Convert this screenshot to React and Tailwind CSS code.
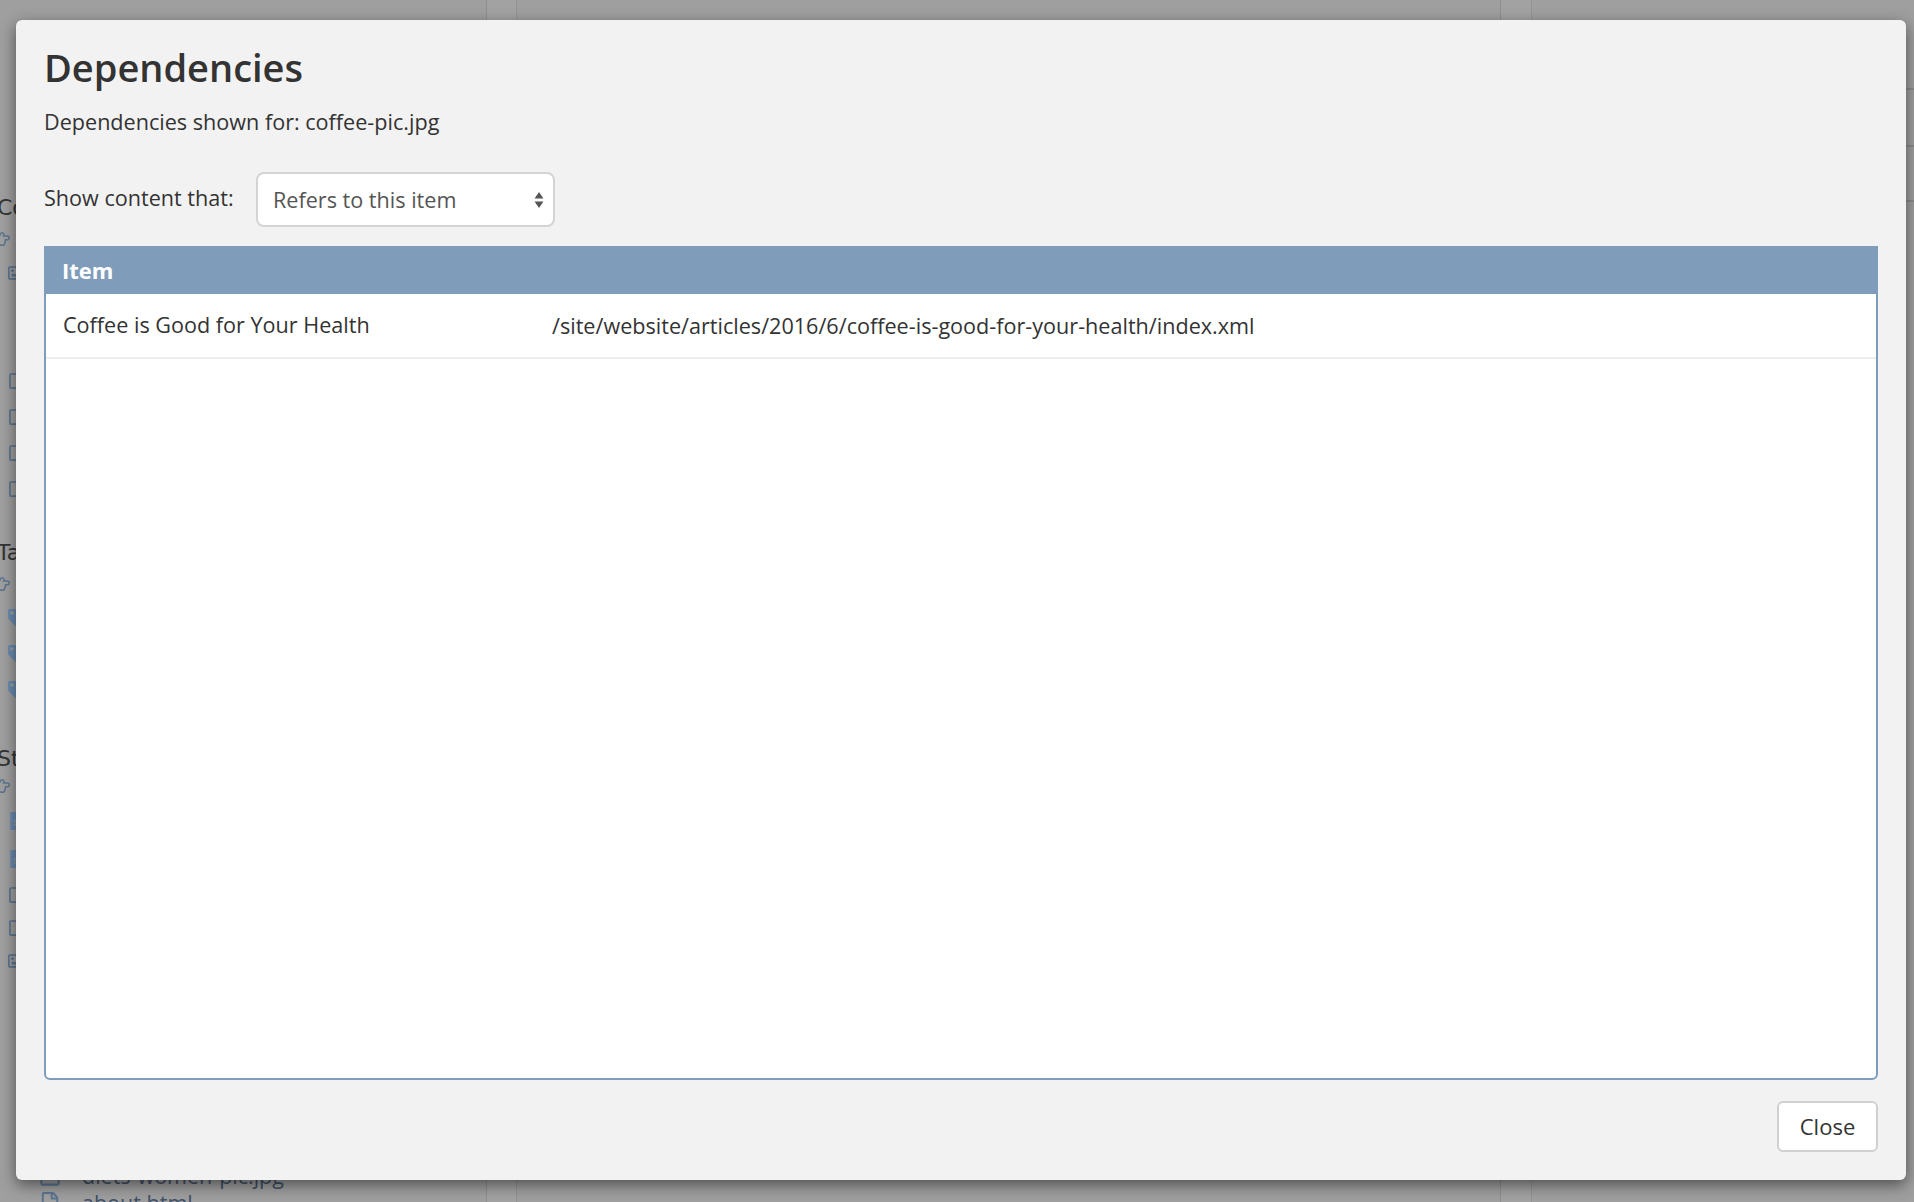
import React from 'react';
import { FaRegHandPointRight, FaRegImage, FaRegSquare, FaTag, FaFileAlt, FaRegFile } from 'react-icons/fa';

const font = { fontFamily: '"Open Sans", "Noto Sans", Arial, sans-serif' };

function NavHeading({ label }) {
    return (
        <div className="h-8 flex items-center -ml-[3px] text-[22px] text-[#333] whitespace-nowrap" style={{ fontFamily: '"DejaVu Sans", sans-serif' }}>
            {label}
        </div>
    );
}

function NavHand() {
    return (
        <div className="h-8 flex items-center -ml-[6px] text-[#5b7590]">
            <FaRegHandPointRight className="w-[16px] h-[16px]" />
        </div>
    );
}

function NavItem({ icon: Icon, tone = 'text-[#5b7590]', label, rowClass = 'h-9' }) {
    return (
        <div className={`${rowClass} flex items-center gap-3 pl-2 whitespace-nowrap text-[18px] text-[#3a4a5c]`}>
            <Icon className={`w-[18px] h-[18px] shrink-0 ${tone}`} />
            <span>{label}</span>
        </div>
    );
}

function Sidebar() {
    return (
        <aside className="w-[487px] h-full shrink-0 border-r border-[#8e8e8e] flex flex-col overflow-hidden">
            <div className="pt-[191px]">
                <NavHeading label="Components" />
                <NavHand />
                <NavItem icon={FaRegImage} label="hero-banner.jpg" />
                <div className="h-9" />
                <div className="h-9" />
                <NavItem icon={FaRegSquare} label="header.xml" />
                <NavItem icon={FaRegSquare} label="footer.xml" />
                <NavItem icon={FaRegSquare} label="left-rail.xml" />
                <NavItem icon={FaRegSquare} label="contact.xml" />

                <div className="mt-[29px]">
                    <NavHeading label="Taxonomy" />
                    <NavHand />
                    <NavItem icon={FaTag} tone="text-[#6b8cb0]" label="categories" />
                    <NavItem icon={FaTag} tone="text-[#6b8cb0]" label="regions" />
                    <NavItem icon={FaTag} tone="text-[#6b8cb0]" label="segments" />
                </div>

                <div className="mt-[34px]">
                    <NavHeading label="Static Assets" />
                    <div className="-mt-[4px]"><NavHand /></div>
                    <NavItem icon={FaFileAlt} tone="text-[#6b8cb0]" rowClass="h-[38px]" label="main.css" />
                    <NavItem icon={FaFileAlt} tone="text-[#6b8cb0]" rowClass="h-[38px]" label="site.js" />
                    <NavItem icon={FaRegSquare} rowClass="h-[33px]" label="fonts" />
                    <NavItem icon={FaRegSquare} rowClass="h-[33px]" label="images" />
                    <NavItem icon={FaRegImage} rowClass="h-[33px]" label="coffee-pic.jpg" />
                </div>
            </div>

            <div className="mt-auto -mb-[15px] pl-[38px]">
                <div className="h-[26px] flex items-center gap-[20px] text-[21.5px] text-[#3f5068]" style={font}>
                    <FaRegSquare className="w-[24px] h-[22px] text-[#5b7590]" />
                    <span>diets-women-pic.jpg</span>
                </div>
                <div className="h-[28px] flex items-center gap-[20px] text-[21.5px] text-[#3f5068]" style={font}>
                    <FaRegFile className="w-[24px] h-[22px] text-[#5b7590]" />
                    <span>about.html</span>
                </div>
            </div>
        </aside>
    );
}

function SortArrows() {
    return (
        <svg width="10" height="18" viewBox="0 0 10 18" className="shrink-0">
            <path d="M5 1 L9.5 7.5 H0.5 Z" fill="#555" />
            <path d="M5 17 L9.5 10.5 H0.5 Z" fill="#555" />
        </svg>
    );
}

function DependenciesDialog() {
    const rows = [
        { name: 'Coffee is Good for Your Health', path: '/site/website/articles/2016/6/coffee-is-good-for-your-health/index.xml' },
    ];

    return (
        <div
            className="absolute left-[16px] top-[20px] w-[1890px] h-[1160px] bg-[#f2f2f2] rounded-[6px] shadow-[0_5px_15px_rgba(0,0,0,0.5)] flex flex-col px-7 pt-[27px] pb-7 text-[#333]"
            style={font}
        >
            <h2 className="text-[38px] leading-[40px] font-semibold">Dependencies</h2>
            <p className="mt-[21px] text-[21.6px] leading-[28px]">Dependencies shown for: coffee-pic.jpg</p>

            <div className="mt-[36px] flex items-center">
                <label className="w-[212px] -mt-[4px] text-[21.6px] leading-[28px]">Show content that:</label>
                <div className="w-[299px] h-[55px] bg-white border-2 border-[#d4d4d4] rounded-[8px] flex items-center justify-between pl-[15px] pr-[9px]">
                    <span className="text-[21.6px] text-[#555] pt-[1px]">Refers to this item</span>
                    <SortArrows />
                </div>
            </div>

            <div className="mt-[19px] flex-1 bg-white border-2 border-[#7f9dba] rounded-b-[6px] flex flex-col">
                <div className="h-[46px] bg-[#7f9dba] flex items-center pl-[16px]">
                    <span className="text-[22px] font-bold text-white -mt-[1px]">Item</span>
                </div>
                {rows.map((row) => (
                    <div key={row.path} className="h-[65px] flex items-center border-b-2 border-[#eeeeee] text-[21.6px]">
                        <div className="w-[506px] pl-[17px]">{row.name}</div>
                        <div className="pt-[2px]">{row.path}</div>
                    </div>
                ))}
            </div>

            <div className="mt-[21px] flex justify-end">
                <button className="w-[101px] h-[51px] bg-white border-2 border-[#d0d0d0] rounded-[6px] text-[22px] text-[#333]">
                    Close
                </button>
            </div>
        </div>
    );
}

export default function App() {
    return (
        <div className="relative w-[1914px] h-[1202px] overflow-hidden bg-[#9f9f9f]">
            <div className="flex h-full">
                <Sidebar />
                <div className="w-[30px] h-full shrink-0 border-r border-[#939393] bg-[#a2a2a2]" />
                <main className="w-[984px] h-full shrink-0 border-r border-[#8e8e8e]" />
                <div className="w-[31px] h-full shrink-0 border-r border-[#939393] bg-[#a2a2a2]" />
                <section className="flex-1 h-full">
                    <div className="h-[90px] border-b-2 border-[#8c8c8c]" />
                    <div className="h-[57px] border-b-2 border-[#8c8c8c]" />
                    <div className="h-[55px] border-b-2 border-[#8c8c8c]" />
                </section>
            </div>
            <DependenciesDialog />
        </div>
    );
}
